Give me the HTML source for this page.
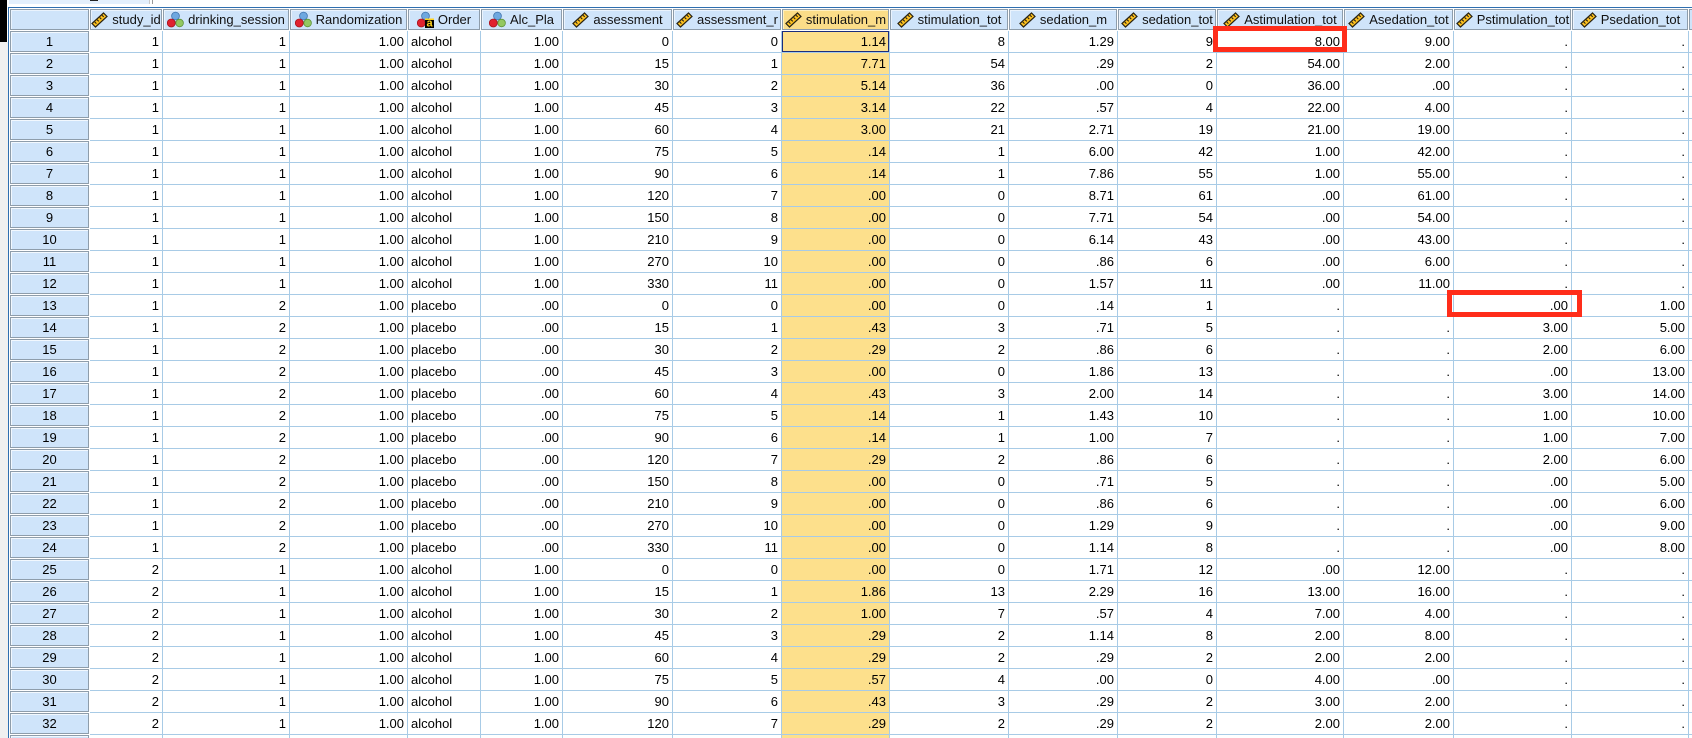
<!DOCTYPE html>
<html><head><meta charset="utf-8"><title>Data View</title>
<style>
html,body{margin:0;padding:0;width:1692px;height:738px;overflow:hidden;background:#fff;position:relative;font-family:"Liberation Sans",Arial,sans-serif;}
#bk{position:absolute;left:0;top:0;width:7px;height:42px;background:#000}
#gr{position:absolute;left:0;top:42px;width:8px;height:696px;background:#f0f0f0}
#vl{position:absolute;left:8px;top:7px;width:1px;height:731px;background:#2f6fb0}
#hl{position:absolute;left:8px;top:7px;width:1684px;height:1px;background:#2f6fb0}
#tb{position:absolute;left:9px;top:0;width:140px;height:4px;background:#e3effc;border-right:1px solid #c8c8c8}
#tb2{position:absolute;left:152px;top:0;width:1px;height:4px;background:#999}
#tk{position:absolute;left:90px;top:0;width:8px;height:1px;background:#222}
#sl{position:absolute;left:1689px;top:9px;width:3px;height:21px;box-sizing:border-box;background:#cfe4fa;border:1px solid #8e9dab;border-right:0}
#gl{position:absolute;left:1689px;top:31px;width:3px;height:707px;background:repeating-linear-gradient(to bottom,transparent 0,transparent 21px,#a8cbe6 21px,#a8cbe6 22px)}
table{position:absolute;left:10px;top:9px;border-collapse:separate;border-spacing:0;table-layout:fixed;width:1679px;font-size:13px;color:#000}
th,td{padding:0;height:22px;box-sizing:border-box;overflow:hidden;white-space:nowrap}
td{text-align:right;padding-right:3px;border-right:1px solid #a8cbe6;border-bottom:1px solid #a8cbe6;line-height:20px;background:#fff}
td:nth-child(5){text-align:left;padding:0 0 0 3px}
td:nth-child(9){background:#fde08c}
td.cur{box-shadow:inset 0 0 0 1px #1b2d7c}
th{font-weight:normal;padding:0 1px 1px 0;vertical-align:top}
tbody th{padding:0 1px 1px 0;text-align:center}
.h{display:flex;align-items:center;justify-content:center;gap:4px;height:21px;box-sizing:border-box;background:#cfe4fa;border:1px solid #8e9dab;box-shadow:inset 1px 1px 0 #eaf3fd;color:#111;overflow:hidden}
.s{background:#fbdd88;box-shadow:inset 1px 1px 0 #fff0c0}
.r{display:block;height:21px;line-height:19px;box-sizing:border-box;background:#cfe4fa;border:1px solid #8e9dab;box-shadow:inset 1px 1px 0 #f2f8fe;color:#000}
.h svg{flex:none;width:17px;height:17px}
.b{position:absolute;border:5px solid #ff2d1a;box-sizing:border-box}
</style></head><body>
<svg width="0" height="0" style="position:absolute"><defs>
<symbol id="m" viewBox="0 0 17 17"><path d="M1 12.5 L12.5 2 L16 5.5 L4.5 16 Z" fill="#ffc21f" stroke="#2a2414" stroke-width="1.2"/><path d="M3.8 11l1.6 1.6M6.2 8.8l1.6 1.6M8.7 6.5l1.6 1.6M11.1 4.3l1.6 1.6" stroke="#2a2414" stroke-width="1.1"/></symbol>
<symbol id="n" viewBox="0 0 17 17"><circle cx="8.5" cy="5" r="3.9" fill="#6ea8e0" stroke="#3f72ac" stroke-width=".8"/><circle cx="4.3" cy="12" r="4" fill="#e02230" stroke="#a8141e" stroke-width=".8"/><circle cx="12.6" cy="12" r="3.8" fill="#93c860" stroke="#5f9438" stroke-width=".8"/></symbol>
<symbol id="o" viewBox="0 0 17 17"><circle cx="8.5" cy="5" r="3.9" fill="#6ea8e0" stroke="#3f72ac" stroke-width=".8"/><circle cx="4.3" cy="12" r="4" fill="#e02230" stroke="#a8141e" stroke-width=".8"/><rect x="8" y="7.5" width="9" height="9.5" fill="#000"/><rect x="8" y="7.5" width="9" height="1.5" fill="#ffd21e"/><text x="12.5" y="15.6" font-size="11" font-weight="bold" text-anchor="middle" fill="#ffd21e" font-family="Liberation Sans">a</text></symbol>
</defs></svg>
<div id="bk"></div><div id="gr"></div><div id="tb"></div><div id="tb2"></div><div id="tk"></div><div id="hl"></div><div id="vl"></div><div id="sl"></div><div id="gl"></div>
<table>
<colgroup><col style="width:80px"><col style="width:73px"><col style="width:127px"><col style="width:118px"><col style="width:73px"><col style="width:82px"><col style="width:110px"><col style="width:109px"><col style="width:108px"><col style="width:119px"><col style="width:109px"><col style="width:99px"><col style="width:127px"><col style="width:110px"><col style="width:118px"><col style="width:117px"></colgroup>
<thead><tr>
<th><div class="h"></div></th>
<th><div class="h"><svg><use href="#m"/></svg>study_id</div></th>
<th><div class="h"><svg><use href="#n"/></svg>drinking_session</div></th>
<th><div class="h"><svg><use href="#n"/></svg>Randomization</div></th>
<th><div class="h"><svg><use href="#o"/></svg>Order</div></th>
<th><div class="h"><svg><use href="#n"/></svg>Alc_Pla</div></th>
<th><div class="h"><svg><use href="#m"/></svg>assessment</div></th>
<th><div class="h"><svg><use href="#m"/></svg>assessment_r</div></th>
<th><div class="h s"><svg><use href="#m"/></svg>stimulation_m</div></th>
<th><div class="h"><svg><use href="#m"/></svg>stimulation_tot</div></th>
<th><div class="h"><svg><use href="#m"/></svg>sedation_m</div></th>
<th><div class="h"><svg><use href="#m"/></svg>sedation_tot</div></th>
<th><div class="h"><svg><use href="#m"/></svg>Astimulation_tot</div></th>
<th><div class="h"><svg><use href="#m"/></svg>Asedation_tot</div></th>
<th><div class="h"><svg><use href="#m"/></svg>Pstimulation_tot</div></th>
<th><div class="h"><svg><use href="#m"/></svg>Psedation_tot</div></th>
</tr></thead>
<tbody>
<tr><th><span class="r">1</span></th><td>1<td>1<td>1.00<td>alcohol<td>1.00<td>0<td>0<td class="cur">1.14<td>8<td>1.29<td>9<td>8.00<td>9.00<td>.<td>.</tr>
<tr><th><span class="r">2</span></th><td>1<td>1<td>1.00<td>alcohol<td>1.00<td>15<td>1<td>7.71<td>54<td>.29<td>2<td>54.00<td>2.00<td>.<td>.</tr>
<tr><th><span class="r">3</span></th><td>1<td>1<td>1.00<td>alcohol<td>1.00<td>30<td>2<td>5.14<td>36<td>.00<td>0<td>36.00<td>.00<td>.<td>.</tr>
<tr><th><span class="r">4</span></th><td>1<td>1<td>1.00<td>alcohol<td>1.00<td>45<td>3<td>3.14<td>22<td>.57<td>4<td>22.00<td>4.00<td>.<td>.</tr>
<tr><th><span class="r">5</span></th><td>1<td>1<td>1.00<td>alcohol<td>1.00<td>60<td>4<td>3.00<td>21<td>2.71<td>19<td>21.00<td>19.00<td>.<td>.</tr>
<tr><th><span class="r">6</span></th><td>1<td>1<td>1.00<td>alcohol<td>1.00<td>75<td>5<td>.14<td>1<td>6.00<td>42<td>1.00<td>42.00<td>.<td>.</tr>
<tr><th><span class="r">7</span></th><td>1<td>1<td>1.00<td>alcohol<td>1.00<td>90<td>6<td>.14<td>1<td>7.86<td>55<td>1.00<td>55.00<td>.<td>.</tr>
<tr><th><span class="r">8</span></th><td>1<td>1<td>1.00<td>alcohol<td>1.00<td>120<td>7<td>.00<td>0<td>8.71<td>61<td>.00<td>61.00<td>.<td>.</tr>
<tr><th><span class="r">9</span></th><td>1<td>1<td>1.00<td>alcohol<td>1.00<td>150<td>8<td>.00<td>0<td>7.71<td>54<td>.00<td>54.00<td>.<td>.</tr>
<tr><th><span class="r">10</span></th><td>1<td>1<td>1.00<td>alcohol<td>1.00<td>210<td>9<td>.00<td>0<td>6.14<td>43<td>.00<td>43.00<td>.<td>.</tr>
<tr><th><span class="r">11</span></th><td>1<td>1<td>1.00<td>alcohol<td>1.00<td>270<td>10<td>.00<td>0<td>.86<td>6<td>.00<td>6.00<td>.<td>.</tr>
<tr><th><span class="r">12</span></th><td>1<td>1<td>1.00<td>alcohol<td>1.00<td>330<td>11<td>.00<td>0<td>1.57<td>11<td>.00<td>11.00<td>.<td>.</tr>
<tr><th><span class="r">13</span></th><td>1<td>2<td>1.00<td>placebo<td>.00<td>0<td>0<td>.00<td>0<td>.14<td>1<td>.<td>.<td>.00<td>1.00</tr>
<tr><th><span class="r">14</span></th><td>1<td>2<td>1.00<td>placebo<td>.00<td>15<td>1<td>.43<td>3<td>.71<td>5<td>.<td>.<td>3.00<td>5.00</tr>
<tr><th><span class="r">15</span></th><td>1<td>2<td>1.00<td>placebo<td>.00<td>30<td>2<td>.29<td>2<td>.86<td>6<td>.<td>.<td>2.00<td>6.00</tr>
<tr><th><span class="r">16</span></th><td>1<td>2<td>1.00<td>placebo<td>.00<td>45<td>3<td>.00<td>0<td>1.86<td>13<td>.<td>.<td>.00<td>13.00</tr>
<tr><th><span class="r">17</span></th><td>1<td>2<td>1.00<td>placebo<td>.00<td>60<td>4<td>.43<td>3<td>2.00<td>14<td>.<td>.<td>3.00<td>14.00</tr>
<tr><th><span class="r">18</span></th><td>1<td>2<td>1.00<td>placebo<td>.00<td>75<td>5<td>.14<td>1<td>1.43<td>10<td>.<td>.<td>1.00<td>10.00</tr>
<tr><th><span class="r">19</span></th><td>1<td>2<td>1.00<td>placebo<td>.00<td>90<td>6<td>.14<td>1<td>1.00<td>7<td>.<td>.<td>1.00<td>7.00</tr>
<tr><th><span class="r">20</span></th><td>1<td>2<td>1.00<td>placebo<td>.00<td>120<td>7<td>.29<td>2<td>.86<td>6<td>.<td>.<td>2.00<td>6.00</tr>
<tr><th><span class="r">21</span></th><td>1<td>2<td>1.00<td>placebo<td>.00<td>150<td>8<td>.00<td>0<td>.71<td>5<td>.<td>.<td>.00<td>5.00</tr>
<tr><th><span class="r">22</span></th><td>1<td>2<td>1.00<td>placebo<td>.00<td>210<td>9<td>.00<td>0<td>.86<td>6<td>.<td>.<td>.00<td>6.00</tr>
<tr><th><span class="r">23</span></th><td>1<td>2<td>1.00<td>placebo<td>.00<td>270<td>10<td>.00<td>0<td>1.29<td>9<td>.<td>.<td>.00<td>9.00</tr>
<tr><th><span class="r">24</span></th><td>1<td>2<td>1.00<td>placebo<td>.00<td>330<td>11<td>.00<td>0<td>1.14<td>8<td>.<td>.<td>.00<td>8.00</tr>
<tr><th><span class="r">25</span></th><td>2<td>1<td>1.00<td>alcohol<td>1.00<td>0<td>0<td>.00<td>0<td>1.71<td>12<td>.00<td>12.00<td>.<td>.</tr>
<tr><th><span class="r">26</span></th><td>2<td>1<td>1.00<td>alcohol<td>1.00<td>15<td>1<td>1.86<td>13<td>2.29<td>16<td>13.00<td>16.00<td>.<td>.</tr>
<tr><th><span class="r">27</span></th><td>2<td>1<td>1.00<td>alcohol<td>1.00<td>30<td>2<td>1.00<td>7<td>.57<td>4<td>7.00<td>4.00<td>.<td>.</tr>
<tr><th><span class="r">28</span></th><td>2<td>1<td>1.00<td>alcohol<td>1.00<td>45<td>3<td>.29<td>2<td>1.14<td>8<td>2.00<td>8.00<td>.<td>.</tr>
<tr><th><span class="r">29</span></th><td>2<td>1<td>1.00<td>alcohol<td>1.00<td>60<td>4<td>.29<td>2<td>.29<td>2<td>2.00<td>2.00<td>.<td>.</tr>
<tr><th><span class="r">30</span></th><td>2<td>1<td>1.00<td>alcohol<td>1.00<td>75<td>5<td>.57<td>4<td>.00<td>0<td>4.00<td>.00<td>.<td>.</tr>
<tr><th><span class="r">31</span></th><td>2<td>1<td>1.00<td>alcohol<td>1.00<td>90<td>6<td>.43<td>3<td>.29<td>2<td>3.00<td>2.00<td>.<td>.</tr>
<tr><th><span class="r">32</span></th><td>2<td>1<td>1.00<td>alcohol<td>1.00<td>120<td>7<td>.29<td>2<td>.29<td>2<td>2.00<td>2.00<td>.<td>.</tr>
<tr><th><span class="r"></span></th><td><td><td><td><td><td><td><td><td><td><td><td><td><td><td><td></tr>
</tbody></table>
<div class="b" style="left:1213px;top:26px;width:134px;height:26px"></div>
<div class="b" style="left:1447px;top:290px;width:135px;height:27px"></div>
</body></html>
